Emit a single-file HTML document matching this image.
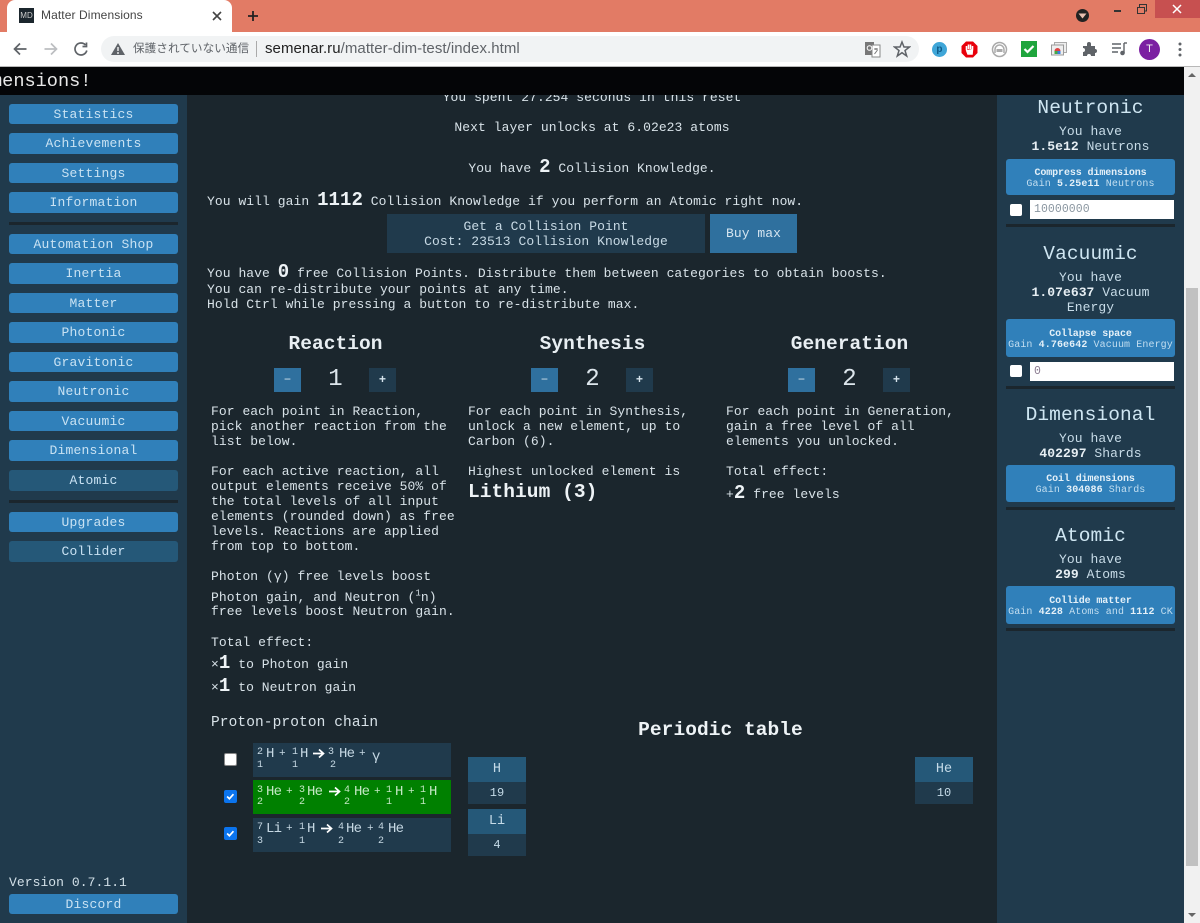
<!DOCTYPE html>
<html><head><meta charset="utf-8"><title>Matter Dimensions</title>
<style>
*{box-sizing:border-box}
html,body{margin:0;padding:0;width:1200px;height:923px;overflow:hidden;background:#1b262d}
body{position:relative;font-family:"Liberation Mono",monospace;font-size:13px;color:#d8e2e8;letter-spacing:.06px}
.a,.t,.c,.b,.d{position:absolute}
.t,.c{white-space:nowrap;line-height:15px}
.c{text-align:center}
.b{left:9px;width:169px;height:20px;background:#3080ba;border-radius:3px;text-align:center;color:#c9e2f3;line-height:22px;font-size:13px;letter-spacing:.2px}
.d{background:#255878}
.s{left:9px;width:169px;height:3px;background:#1b262d;position:absolute}
.r{left:1006px;width:169px;height:3px;background:#1b262d;position:absolute}
.rb{position:absolute;left:1006px;width:169px;background:#3080ba;border-radius:3px;text-align:center;color:#c3def0;font-size:10px;line-height:11px;letter-spacing:.1px}
.rb b{color:#e4f0f8}
.rb b.n{font-size:10px;letter-spacing:-.1px}
.h{position:absolute;left:997px;width:187px;text-align:center;font-size:19.5px;line-height:22px;color:#cfe6f2;letter-spacing:.1px}
.y{position:absolute;left:997px;width:187px;text-align:center;line-height:15px;color:#c8dce8}
.y b{color:#e6eef3}
.big{font-size:19px;font-weight:bold;color:#eef3f6}
.h2{position:absolute;text-align:center;font-size:19.5px;font-weight:bold;color:#e8eef2;line-height:24px;white-space:nowrap}
.bt{position:absolute;display:flex;align-items:center;justify-content:center;color:#d5e3ec;font-size:12px}
.rx{position:absolute;left:253px;width:198px;height:34px;background:#203a4c;color:#c6d8e3;font-size:14px;letter-spacing:-.8px}
.rx span{position:absolute;white-space:nowrap;line-height:14px}
.rx i{font-style:normal;position:absolute;font-size:10px;line-height:10px;white-space:nowrap;letter-spacing:0}
.rx span.p{font-size:11px;letter-spacing:0;top:4px}
.el{position:absolute;width:58px;text-align:center;color:#c5dbe8}
.el div:first-child{height:25px;background:#255878;line-height:25px;font-size:13.5px}
.el div:last-child{height:22px;background:#203a4c;line-height:22px;font-size:12px}
.cb{position:absolute;width:13px;height:13px;border-radius:2px;background:#fff;border:1px solid #888}
.cb.on{background:#0b74ee;border-color:#0b74ee}
</style></head><body>

<!-- Chrome frame -->
<div class="a" style="left:0;top:0;width:1200px;height:32px;background:#e27b65"></div>
<div class="a" style="left:7px;top:0;width:225px;height:32px;background:#fff;border-radius:8px 8px 0 0"></div>
<div class="a" style="left:19px;top:8px;width:15px;height:15px;background:#1b262d;color:#ccc;font:8px/15px 'Liberation Sans',sans-serif;text-align:center">MD</div>
<div class="t" style="left:41px;top:8px;font:12px/15px 'Liberation Sans',sans-serif;color:#444;letter-spacing:.1px">Matter Dimensions</div>
<svg class="a" style="left:211px;top:10px" width="12" height="12"><path d="M2 2L10 10M10 2L2 10" stroke="#444" stroke-width="1.6"/></svg>
<svg class="a" style="left:246px;top:9px" width="14" height="14"><path d="M7 2V12M2 7H12" stroke="#222" stroke-width="1.8"/></svg>
<div class="a" style="left:1076px;top:9px;width:13px;height:13px;border-radius:50%;background:#222"></div>
<svg class="a" style="left:1078px;top:13px" width="9" height="6"><path d="M0.5 0.5H8.5L4.5 5.5Z" fill="#e8c0b0"/></svg>
<div class="a" style="left:1114px;top:10px;width:7px;height:2px;background:#333"></div>
<svg class="a" style="left:1136px;top:3px" width="12" height="12"><path d="M1.5 4.5H8.5V10.5H1.5ZM3.5 4V1.5H10.5V8H9" fill="none" stroke="#333"/></svg>
<div class="a" style="left:1155px;top:0;width:45px;height:18px;background:#c75050"></div>
<svg class="a" style="left:1171px;top:3px" width="12" height="12"><path d="M2 2L10 10M10 2L2 10" stroke="#fff" stroke-width="1.5"/></svg>

<div class="a" style="left:0;top:32px;width:1200px;height:34px;background:#fff"></div>
<div class="a" style="left:0;top:66px;width:1200px;height:1px;background:#b8b8b8"></div>
<svg class="a" style="left:13px;top:40px" width="14" height="18" fill="none" stroke-width="1.7"><path d="M13.5 9H1.5M7 3.5L1.5 9L7 14.5" stroke="#5f6368"/></svg>
<svg class="a" style="left:44px;top:40px" width="14" height="18" fill="none" stroke-width="1.7"><path d="M0.5 9H12.5M7 3.5L12.5 9L7 14.5" stroke="#bcbec1"/></svg>
<svg class="a" style="left:73px;top:41px" width="16" height="16" fill="none" stroke-width="1.7"><path d="M12.5 4A6 6 0 1 0 13.8 9.5M13.5 1.5V5.5H9.5" stroke="#5f6368"/></svg>
<div class="a" style="left:101px;top:36px;width:818px;height:26px;border-radius:13px;background:#f1f3f4"></div>
<svg class="a" style="left:110px;top:42px" width="16" height="14"><path d="M8 1L15 13H1Z" fill="#5f6368"/><path d="M8 5V9M8 10V12" stroke="#fff" stroke-width="1.3"/></svg>
<div class="t" style="left:133px;top:41px;font:11.6px/16px 'Liberation Sans','Noto Sans CJK JP',sans-serif;color:#5f6368">保護されていない通信</div>
<div class="a" style="left:256px;top:41px;width:1px;height:16px;background:#aaa"></div>
<div class="t" style="left:265px;top:41px;font:15px/16px 'Liberation Sans',sans-serif;color:#5f6368"><span style="color:#222">semenar.ru</span>/matter-dim-test/index.html</div>
<!-- toolbar icons -->
<svg class="a" style="left:864px;top:41px" width="18" height="17"><rect x="1" y="1" width="9" height="13" fill="#777"/><rect x="8" y="4" width="8" height="12" fill="#fff" stroke="#888"/><circle cx="5.5" cy="7" r="2.3" fill="none" stroke="#fff"/><path d="M10 8H14M12 7V9M10.5 13L13.5 9" stroke="#777"/></svg>
<svg class="a" style="left:893px;top:40px" width="18" height="18"><path d="M9 2L11 7H16.5L12 10.5L13.7 16L9 12.7L4.3 16L6 10.5L1.5 7H7Z" fill="none" stroke="#5f6368" stroke-width="1.5"/></svg>
<div class="a" style="left:932px;top:42px;width:15px;height:15px;border-radius:50%;background:#3fa6d8"></div>
<div class="t" style="left:932px;top:42px;width:15px;text-align:center;font:bold 10px/15px 'Liberation Sans',sans-serif;color:#0e5a88">p</div>
<svg class="a" style="left:961px;top:41px" width="17" height="17"><path d="M5 .5H12L16.5 5V12L12 16.5H5L.5 12V5Z" fill="#e8000b"/><path d="M5.5 9V5M7.5 8V3.5M9.5 8V3.5M11.5 8.5V5M5.5 9L7 13H11L11.5 8" stroke="#fff" stroke-width="1.6" fill="#fff"/></svg>
<svg class="a" style="left:991px;top:41px" width="17" height="17" fill="none" stroke="#aaa" stroke-width="1.5"><circle cx="8.5" cy="8.5" r="7"/><path d="M4 12V8.5A4.5 4.5 0 0 1 13 8.5V12"/><rect x="5.5" y="8" width="6" height="3" fill="#aaa" stroke="none"/></svg>
<svg class="a" style="left:1021px;top:41px" width="16" height="16"><rect width="16" height="16" fill="#1fa53d"/><path d="M3.5 8L6.5 11L12.5 5" stroke="#fff" stroke-width="2.2" fill="none"/></svg>
<svg class="a" style="left:1051px;top:42px" width="16" height="14"><rect x="3.5" y=".5" width="12" height="10" fill="#eee" stroke="#aaa"/><rect x=".5" y="3" width="12" height="10" fill="#eee" stroke="#999"/><circle cx="6.5" cy="9" r="3" fill="#d44"/><path d="M6.5 9V12H9.5V9" fill="#3a7ee0"/><path d="M3.5 9V12H6.5V9Z" fill="#4a4"/></svg>
<svg class="a" style="left:1082px;top:41px" width="16" height="16"><path d="M1 5H5V3A2 2 0 0 1 9 3V5H13V8A2 2 0 0 1 13 12V15H9A2 2 0 0 0 5 15H1V11A2 2 0 0 0 1 7Z" fill="#5f6368"/></svg>
<svg class="a" style="left:1112px;top:42px" width="15" height="14" fill="none" stroke="#5f6368" stroke-width="1.4"><path d="M0 2H9M0 6H9M0 10H6M12 1V11"/><circle cx="10.5" cy="11" r="1.6" fill="#5f6368"/><path d="M12 1H15"/></svg>
<div class="a" style="left:1139px;top:39px;width:21px;height:21px;border-radius:50%;background:#7b1fa2;color:#eee;font:11px/21px 'Liberation Sans',sans-serif;text-align:center">T</div>
<svg class="a" style="left:1177px;top:42px" width="6" height="15"><circle cx="3" cy="2" r="1.5" fill="#5f6368"/><circle cx="3" cy="7.5" r="1.5" fill="#5f6368"/><circle cx="3" cy="13" r="1.5" fill="#5f6368"/></svg>

<!-- Scrollbar -->
<div class="a" style="left:1184px;top:67px;width:16px;height:856px;background:#f1f1f1"></div>
<svg class="a" style="left:1188px;top:72px" width="8" height="6"><path d="M0 5L4 1L8 5Z" fill="#666"/></svg>
<svg class="a" style="left:1188px;top:912px" width="8" height="6"><path d="M0 1L4 5L8 1Z" fill="#666"/></svg>
<div class="a" style="left:1186px;top:288px;width:12px;height:578px;background:#c1c1c1"></div>

<!-- Left sidebar -->
<div class="a" style="left:0;top:95px;width:187px;height:828px;background:#203a4c"></div>
<div class="b" style="top:104px">Statistics</div>
<div class="b" style="top:133px;height:21px">Achievements</div>
<div class="b" style="top:163px">Settings</div>
<div class="b" style="top:192px;height:21px">Information</div>
<div class="s" style="top:222px"></div>
<div class="b" style="top:234px">Automation Shop</div>
<div class="b" style="top:263px;height:21px">Inertia</div>
<div class="b" style="top:293px">Matter</div>
<div class="b" style="top:322px;height:21px">Photonic</div>
<div class="b" style="top:352px">Gravitonic</div>
<div class="b" style="top:381px;height:21px">Neutronic</div>
<div class="b" style="top:411px">Vacuumic</div>
<div class="b" style="top:440px;height:21px">Dimensional</div>
<div class="b d" style="top:470px;height:21px">Atomic</div>
<div class="s" style="top:500px"></div>
<div class="b" style="top:512px">Upgrades</div>
<div class="b d" style="top:541px;height:21px">Collider</div>
<div class="t" style="left:9px;top:875px;color:#d2e0e8">Version 0.7.1.1</div>
<div class="b" style="top:894px">Discord</div>

<!-- Main content -->
<div class="c" style="left:187px;width:810px;top:90px">You spent 27.254 seconds in this reset</div>

<!-- Page header -->
<div class="a" style="left:0;top:67px;width:1184px;height:28px;background:#040507"></div>
<div class="t" style="left:-9px;top:72px;font-size:18.6px;line-height:20px;color:#e8e8e8;letter-spacing:0">mensions!</div>

<div class="c" style="left:187px;width:810px;top:120px">Next layer unlocks at 6.02e23 atoms</div>
<div class="c" style="left:187px;width:810px;top:157px;line-height:20px">You have <span class="big">2</span> Collision Knowledge.</div>
<div class="t" style="left:207px;top:190px;line-height:20px">You will gain <span class="big">1112</span> Collision Knowledge if you perform an Atomic right now.</div>
<div class="a c" style="left:387px;top:214px;width:318px;height:39px;background:#203a4c;padding-top:5px;color:#c8dae5">Get a Collision Point<br>Cost: 23513 Collision Knowledge</div>
<div class="a c" style="left:710px;top:214px;width:87px;height:39px;background:#2f709e;line-height:39px;color:#d5e5f0">Buy max</div>
<div class="t" style="left:207px;top:262px;line-height:20px">You have <span class="big">0</span> free Collision Points. Distribute them between categories to obtain boosts.</div>
<div class="t" style="left:207px;top:282px">You can re-distribute your points at any time.</div>
<div class="t" style="left:207px;top:297px">Hold Ctrl while pressing a button to re-distribute max.</div>

<div class="h2" style="left:207px;width:257px;top:332px">Reaction</div>
<div class="h2" style="left:464px;width:257px;top:332px">Synthesis</div>
<div class="h2" style="left:721px;width:257px;top:332px">Generation</div>

<div class="bt" style="left:274px;top:368px;width:27px;height:24px;background:#2f709e">−</div>
<div class="c" style="left:322px;width:27px;top:368px;font-size:24px;line-height:24px;color:#dde6ec">1</div>
<div class="bt" style="left:369px;top:368px;width:27px;height:24px;background:#203a4c;font-weight:bold">+</div>
<div class="bt" style="left:531px;top:368px;width:27px;height:24px;background:#2f709e">−</div>
<div class="c" style="left:579px;width:27px;top:368px;font-size:24px;line-height:24px;color:#dde6ec">2</div>
<div class="bt" style="left:626px;top:368px;width:27px;height:24px;background:#203a4c;font-weight:bold">+</div>
<div class="bt" style="left:788px;top:368px;width:27px;height:24px;background:#2f709e">−</div>
<div class="c" style="left:836px;width:27px;top:368px;font-size:24px;line-height:24px;color:#dde6ec">2</div>
<div class="bt" style="left:883px;top:368px;width:27px;height:24px;background:#203a4c;font-weight:bold">+</div>

<div class="t" style="left:211px;top:404px">For each point in Reaction,<br>pick another reaction from the<br>list below.</div>
<div class="t" style="left:211px;top:464px">For each active reaction, all<br>output elements receive 50% of<br>the total levels of all input<br>elements (rounded down) as free<br>levels. Reactions are applied<br>from top to bottom.</div>
<div class="t" style="left:211px;top:569px">Photon (γ) free levels boost</div>
<div class="t" style="left:211px;top:590px">Photon gain, and Neutron (<sup style="font-size:9px;line-height:0">1</sup>n)</div>
<div class="t" style="left:211px;top:604px">free levels boost Neutron gain.</div>
<div class="t" style="left:211px;top:635px">Total effect:</div>
<div class="t" style="left:211px;top:652px;line-height:22px">×<span class="big">1</span> to Photon gain</div>
<div class="t" style="left:211px;top:675px;line-height:22px">×<span class="big">1</span> to Neutron gain</div>

<div class="t" style="left:468px;top:404px">For each point in Synthesis,<br>unlock a new element, up to<br>Carbon (6).</div>
<div class="t" style="left:468px;top:464px">Highest unlocked element is</div>
<div class="t" style="left:468px;top:481px;font-size:19.5px;font-weight:bold;line-height:22px;color:#eef3f6">Lithium (3)</div>

<div class="t" style="left:726px;top:404px">For each point in Generation,<br>gain a free level of all<br>elements you unlocked.</div>
<div class="t" style="left:726px;top:464px">Total effect:</div>
<div class="t" style="left:726px;top:483px;line-height:20px">+<span class="big">2</span> free levels</div>

<div class="t" style="left:211px;top:715px;font-size:14.5px;letter-spacing:.1px;line-height:16px">Proton-proton chain</div>
<div class="c" style="left:464px;width:513px;top:718px;font-size:19.5px;font-weight:bold;line-height:24px;color:#eef3f6">Periodic table</div>

<div class="cb" style="left:224px;top:753px"></div>
<svg class="cb on" style="left:224px;top:790px" viewBox="0 0 13 13"><path d="M2.5 6.5L5.2 9.2L10 3.8" stroke="#fff" stroke-width="2" fill="none"/></svg>
<svg class="cb on" style="left:224px;top:827px" viewBox="0 0 13 13"><path d="M2.5 6.5L5.2 9.2L10 3.8" stroke="#fff" stroke-width="2" fill="none"/></svg>

<div class="rx" style="top:743px">
<i style="left:4px;top:5px">2</i><span style="left:13px;top:4px">H</span><i style="left:4px;top:18px">1</i>
<span class="p" style="left:26px">+</span>
<i style="left:39px;top:5px">1</i><span style="left:47px;top:4px">H</span><i style="left:39px;top:18px">1</i>
<svg style="position:absolute;left:60px;top:5px" width="12" height="11"><path d="M0 5.5H10M6 1.5L10.5 5.5L6 9.5" stroke="#fff" stroke-width="1.7" fill="none"/></svg>
<i style="left:75px;top:5px">3</i><span style="left:86px;top:4px">He</span><i style="left:77px;top:18px">2</i>
<span class="p" style="left:106px">+</span>
<span style="left:119px;top:7px">γ</span></div>

<div class="rx" style="top:780px;background:#008000;color:#c4e8c4">
<i style="left:4px;top:6px">3</i><span style="left:13px;top:5px">He</span><i style="left:4px;top:18px">2</i>
<span class="p" style="left:33px;top:5px">+</span>
<i style="left:46px;top:6px">3</i><span style="left:54px;top:5px">He</span><i style="left:46px;top:18px">2</i>
<svg style="position:absolute;left:76px;top:6px" width="12" height="11"><path d="M0 5.5H10M6 1.5L10.5 5.5L6 9.5" stroke="#fff" stroke-width="1.7" fill="none"/></svg>
<i style="left:91px;top:6px">4</i><span style="left:101px;top:5px">He</span><i style="left:91px;top:18px">2</i>
<span class="p" style="left:121px;top:5px">+</span>
<i style="left:133px;top:6px">1</i><span style="left:142px;top:5px">H</span><i style="left:133px;top:18px">1</i>
<span class="p" style="left:155px;top:5px">+</span>
<i style="left:167px;top:6px">1</i><span style="left:176px;top:5px">H</span><i style="left:167px;top:18px">1</i></div>

<div class="rx" style="top:818px">
<i style="left:4px;top:5px">7</i><span style="left:13px;top:4px">Li</span><i style="left:4px;top:19px">3</i>
<span class="p" style="left:33px">+</span>
<i style="left:46px;top:5px">1</i><span style="left:54px;top:4px">H</span><i style="left:46px;top:19px">1</i>
<svg style="position:absolute;left:68px;top:5px" width="12" height="11"><path d="M0 5.5H10M6 1.5L10.5 5.5L6 9.5" stroke="#fff" stroke-width="1.7" fill="none"/></svg>
<i style="left:85px;top:5px">4</i><span style="left:93px;top:4px">He</span><i style="left:85px;top:19px">2</i>
<span class="p" style="left:114px">+</span>
<i style="left:125px;top:5px">4</i><span style="left:135px;top:4px">He</span><i style="left:125px;top:19px">2</i></div>

<div class="el" style="left:468px;top:757px"><div>H</div><div>19</div></div>
<div class="el" style="left:468px;top:809px"><div>Li</div><div>4</div></div>
<div class="el" style="left:915px;top:757px"><div>He</div><div>10</div></div>

<!-- Right sidebar -->
<div class="a" style="left:997px;top:95px;width:187px;height:828px;background:#203a4c"></div>
<div class="h" style="top:97px">Neutronic</div>
<div class="y" style="top:124px">You have<br><b>1.5e12</b> Neutrons</div>
<div class="rb" style="top:159px;height:36px;padding-top:9px"><b class="n">Compress dimensions</b><br>Gain <b>5.25e11</b> Neutrons</div>
<div class="a" style="left:1010px;top:204px;width:12px;height:12px;background:#fff;border-radius:2px"></div>
<div class="a" style="left:1030px;top:200px;width:144px;height:19px;background:#fff;color:#8a96a0;font-size:11.5px;line-height:19px;padding-left:4px">10000000</div>
<div class="r" style="top:224px"></div>

<div class="h" style="top:243px">Vacuumic</div>
<div class="y" style="top:270px">You have<br><b>1.07e637</b> Vacuum<br>Energy</div>
<div class="rb" style="top:319px;height:38px;padding-top:10px"><b class="n">Collapse space</b><br>Gain <b>4.76e642</b> Vacuum Energy</div>
<div class="a" style="left:1010px;top:365px;width:12px;height:12px;background:#fff;border-radius:2px"></div>
<div class="a" style="left:1030px;top:362px;width:144px;height:19px;background:#fff;color:#8a7a90;font-size:11.5px;line-height:19px;padding-left:4px">0</div>
<div class="r" style="top:386px"></div>

<div class="h" style="top:404px">Dimensional</div>
<div class="y" style="top:431px">You have<br><b>402297</b> Shards</div>
<div class="rb" style="top:465px;height:37px;padding-top:9px"><b class="n">Coil dimensions</b><br>Gain <b>304086</b> Shards</div>
<div class="r" style="top:507px"></div>

<div class="h" style="top:525px">Atomic</div>
<div class="y" style="top:552px">You have<br><b>299</b> Atoms</div>
<div class="rb" style="top:586px;height:38px;padding-top:10px"><b class="n">Collide matter</b><br>Gain <b>4228</b> Atoms and <b>1112</b> CK</div>
<div class="r" style="top:628px"></div>
</body></html>
